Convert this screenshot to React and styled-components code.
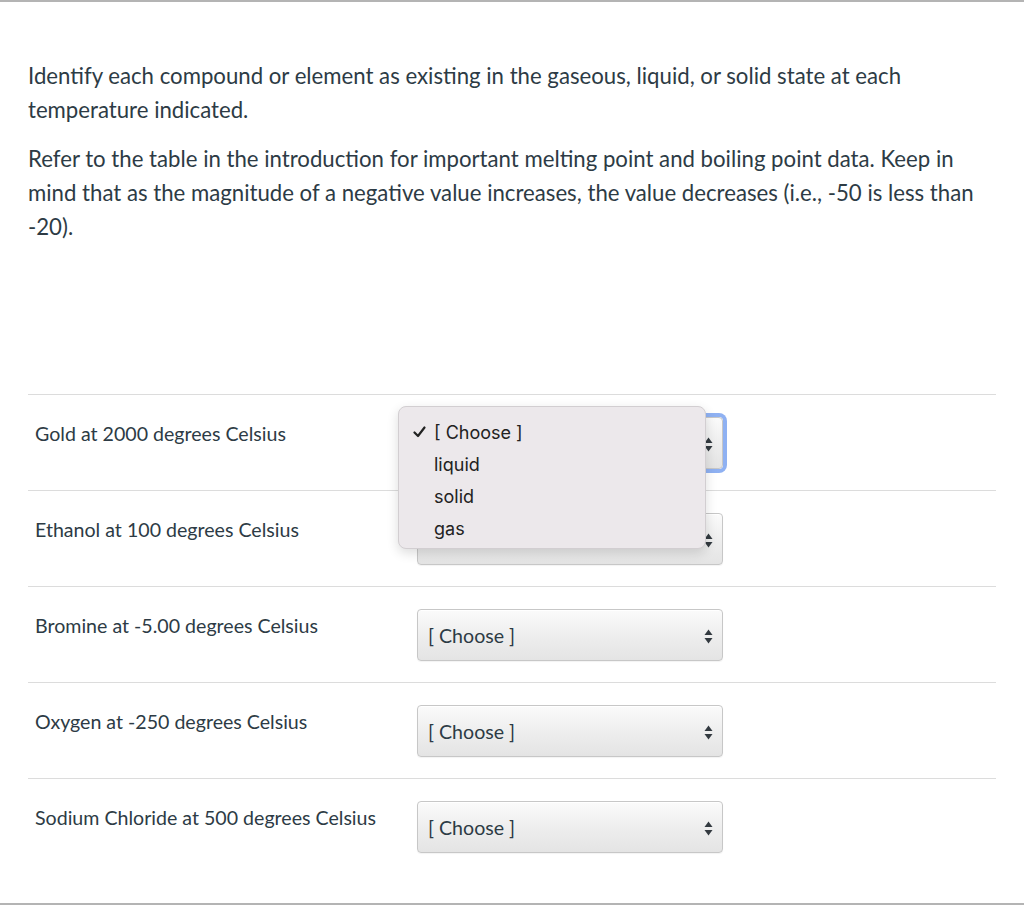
import React from "react";
import styled, { createGlobalStyle } from "styled-components";

const GlobalStyle = createGlobalStyle`
  html, body {
    margin: 0;
    padding: 0;
    background: #ffffff;
  }
  body {
    font-family: Lato, "Open Sans", sans-serif;
    color: #2d3b45;
  }
`;

const items = [
  { label: "Gold at 2000 degrees Celsius", open: true },
  { label: "Ethanol at 100 degrees Celsius", hidden: true },
  { label: "Bromine at -5.00 degrees Celsius" },
  { label: "Oxygen at -250 degrees Celsius" },
  { label: "Sodium Chloride at 500 degrees Celsius" },
];

const options = ["[ Choose ]", "liquid", "solid", "gas"];

// Page: Question
export default function App() {
  return (
    <>
      <GlobalStyle />
      <Page>
        <Text>
          Identify each compound or element as existing in the gaseous, liquid,
          or solid state at each temperature indicated.
        </Text>
        <Text>
          Refer to the table in the introduction for important melting point
          and boiling point data. Keep in mind that as the magnitude of a
          negative value increases, the value decreases (i.e., -50 is less than
          -20).
        </Text>

        <Answers>
          {items.map((item) => (
            <Row key={item.label}>
              <Label>{item.label}</Label>
              <SelectWrap>
                <Select $focused={item.open}>
                  <SelectText>
                    {item.open || item.hidden ? "" : "[ Choose ]"}
                  </SelectText>
                  <Arrows />
                </Select>
                {item.open && (
                  <Menu>
                    {options.map((opt, i) => (
                      <MenuItem key={opt}>
                        <Check>
                          {i === 0 && (
                            <svg width="13" height="12" viewBox="0 0 13 12">
                              <path
                                d="M1.5 6.5 L5 10 L11.5 1.5"
                                fill="none"
                                stroke="#222"
                                strokeWidth="2.2"
                                strokeLinecap="round"
                                strokeLinejoin="round"
                              />
                            </svg>
                          )}
                        </Check>
                        {opt}
                      </MenuItem>
                    ))}
                  </Menu>
                )}
              </SelectWrap>
            </Row>
          ))}
        </Answers>
      </Page>
    </>
  );
}

function Arrows() {
  return (
    <ArrowIcon width="9" height="15" viewBox="0 0 9 15">
      <path d="M4.5 0.5 L8.5 6 L0.5 6 Z" fill="#333a40" />
      <path d="M0.5 9 L8.5 9 L4.5 14.5 Z" fill="#333a40" />
    </ArrowIcon>
  );
}

// Element: Page
const Page = styled.div`
  border-top: 2px solid #b4b4b4;
  border-bottom: 2px solid #b4b4b4;
  padding: 57px 28px 28px;
  height: 905px;
  box-sizing: border-box;
`;

// Element: Text
const Text = styled.p`
  margin: 0 0 15px;
  font-size: 22.2px;
  line-height: 34px;
  color: #2d3b45;
`;

// Element: Answers
const Answers = styled.div`
  margin-top: 150px;
`;

// Element: Row
const Row = styled.div`
  display: grid;
  grid-template-columns: 382px 306px;
  align-items: start;
  height: 96px;
  box-sizing: border-box;
  border-top: 1px solid #dcdcdc;
  padding: 22px 0 0 7px;
`;

// Element: Label
const Label = styled.div`
  margin-top: 3px;
  font-size: 19.6px;
  line-height: 27px;
  color: #2d3b45;
`;

// Element: SelectWrap
const SelectWrap = styled.div`
  position: relative;
  width: 306px;
`;

// Element: Select
const Select = styled.div`
  display: flex;
  align-items: center;
  justify-content: space-between;
  height: 52px;
  box-sizing: border-box;
  padding: 0 9px 0 10px;
  border: 1px solid #c7c7c7;
  border-radius: 4px;
  background: linear-gradient(#fbfbfb 0%, #ededed 55%, #e4e4e4 100%);
  box-shadow: ${(p) =>
    p.$focused
      ? "0 0 0 4px #8fb1f2"
      : "inset 0 1px 0 #ffffff, 0 1px 1px rgba(0,0,0,0.05)"};
`;

// Element: SelectText
const SelectText = styled.span`
  font-size: 19.6px;
  color: #2d3b45;
`;

// Element: ArrowIcon
const ArrowIcon = styled.svg`
  display: block;
  margin-top: 2px;
`;

// Element: Menu
const Menu = styled.div`
  position: absolute;
  left: -19px;
  top: -11px;
  width: 308px;
  height: 143px;
  box-sizing: border-box;
  padding: 9px 0 6px;
  background: #ece8eb;
  border: 1px solid #d2ced1;
  border-radius: 8px;
  box-shadow: 0 4px 12px rgba(0, 0, 0, 0.14);
  z-index: 2;
`;

// Element: MenuItem
const MenuItem = styled.div`
  display: flex;
  align-items: center;
  height: 32px;
  padding-left: 14px;
  font-family: Inter, "Liberation Sans", sans-serif;
  font-size: 18px;
  color: #222222;
`;

// Element: Check
const Check = styled.span`
  display: flex;
  align-items: center;
  width: 21px;
`;
